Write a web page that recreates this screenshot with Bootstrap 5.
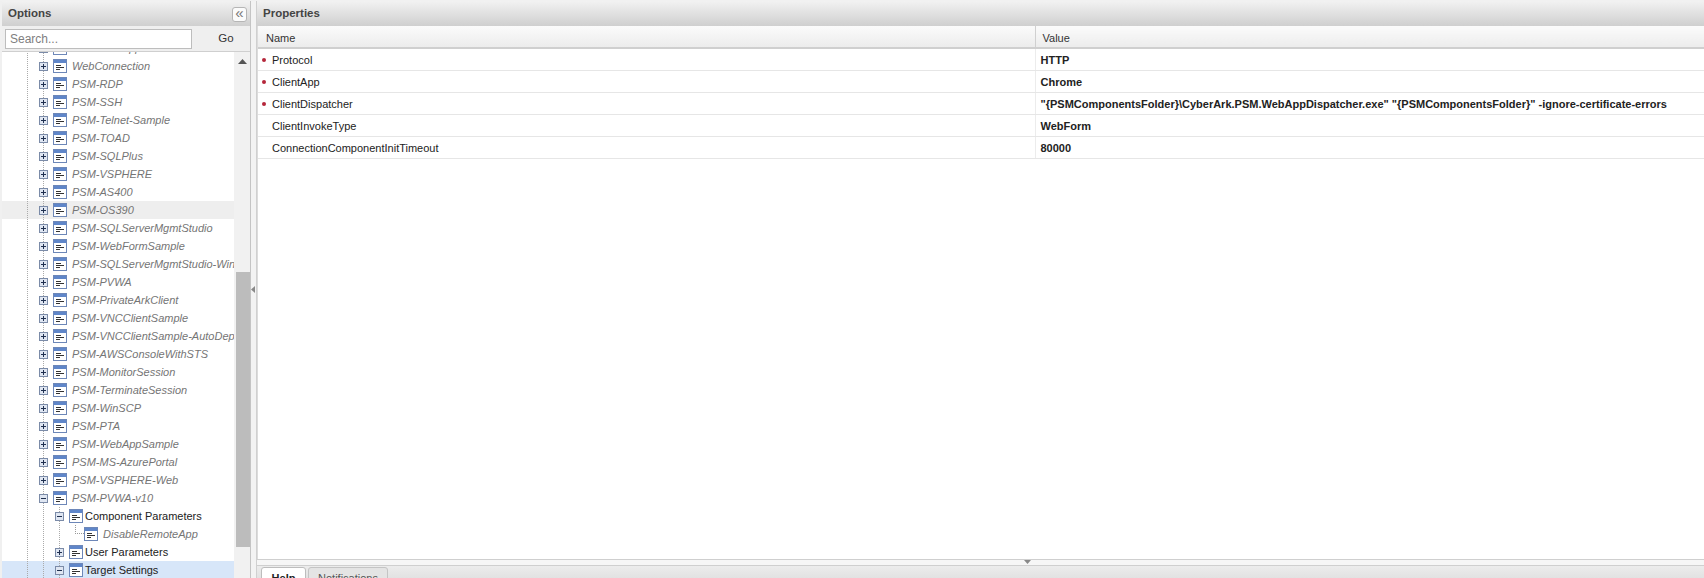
<!DOCTYPE html>
<html lang="en">
<head>
<meta charset="utf-8">
<title>Options</title>
<link rel="stylesheet" href="https://cdn.jsdelivr.net/npm/bootstrap@5.3.0/dist/css/bootstrap.min.css">
<style>
html,body{height:100%;}
body{font-family:"Liberation Sans",Arial,sans-serif;font-size:11px;color:#222;background:#f1f1f1;overflow:hidden;}
.shell{height:578px;padding-top:1px;}
.left-pane{width:251px;flex:none;padding-left:2px;border-right:1px solid #c4c4c4;background:#f0f0f0;}
.split-v{width:6px;flex:none;background:#f3f3f3;border-right:1px solid #d0d0d0;}
.split-v svg{display:block;}
.right-pane{min-width:0;}
.head-bar{height:25px;flex:none;background:linear-gradient(#f2f2f2,#cfcfcf);font-weight:700;font-size:11.5px;color:#444;padding:1px 6px 0;}
.collapse-btn{width:15px;height:15px;padding:0 0 2px;border:1px solid #b5b5b5;border-radius:3px;background:#fbfbfb;color:#777;font-size:15px;line-height:10px;margin-right:-3px;}
.search-row{height:26px;flex:none;background:#efefef;border-bottom:1px solid #cfcfcf;padding:3px 0 3px 3px;}
.search-box{width:187px;height:20px;border:1px solid #bdbdbd;border-radius:0;padding:0 4px;font-size:12px;font-family:inherit;color:#777;}
.search-box::placeholder{color:#808080;opacity:1;}
.go-label{flex:1;text-align:center;font-size:11.5px;color:#333;padding-left:10px;}
.tree-area{min-height:0;background:#fff;}
.tree-list{width:232px;overflow:hidden;flex:none;}
.tree-inner{margin-top:-13px;}
.tree-row{height:18px;white-space:nowrap;--g:linear-gradient(#aaa 50%,transparent 50%);background-image:var(--g),var(--g);background-size:1px 2px;background-repeat:repeat-y;background-position:25px 0,41px 0;}
.tree-row.deep{background-image:var(--g),var(--g),var(--g);background-position:25px 0,41px 0,57px 0;}
.tree-row.seen{background-color:#eee;}
.tree-row.picked{background-color:#d7e6f9;}
.ind-1{padding-left:37px;}
.ind-2{padding-left:53px;}
.ind-3{padding-left:73px;}
.tg{width:9px;height:9px;flex:none;margin-right:5px;}
.nd{width:14px;height:14px;flex:none;margin-right:5px;}
.elbow{width:9px;height:9px;flex:none;margin-top:-9px;border-left:1px dotted #999;border-bottom:1px dotted #999;}
.opt{font-style:italic;color:#757575;font-size:11px;}
.grp{color:#222;font-size:11px;margin-left:-3px;}
.scroll-track{width:17px;flex:none;background:#f1f1f1;}
.scroll-up{height:18px;color:#555;}
.scroll-gap{height:202px;flex:none;}
.scroll-thumb{height:275px;flex:none;margin:0 1px 0 2px;background:#bcbcbc;}
.prop-wrap{min-height:0;background:#fff;border-left:1px solid #dcdcdc;}
.prop-table{width:100%;table-layout:fixed;margin:0;font-size:11px;}
.prop-table th{height:22px;padding:3px 0 0 8px;font-weight:400;color:#333;border-bottom:2px solid #cfcfcf;background:linear-gradient(#fbfbfb,#ececec);vertical-align:middle;}
.prop-table th+th{border-left:1px solid #d0d0d0;padding-left:7px;}
.prop-table td{height:22px;padding:2px 0 0 14px;color:#222;border-bottom:1px solid #e6e6e6;vertical-align:middle;background:#fff;position:relative;}
.prop-table td+td{border-left:1px solid #ececec;padding-left:5px;font-weight:700;white-space:nowrap;}
.prop-name{width:777px;}
.req::before{content:"";position:absolute;left:4px;top:9px;width:4px;height:4px;border-radius:50%;background:#b5263a;}
.split-h{height:7px;flex:none;background:#f6f6f6;border-top:1px solid #cfcfcf;border-bottom:1px solid #cfcfcf;padding-left:94px;}
.tab-strip{height:12px;flex:none;background:linear-gradient(#ececec,#e2e2e2);padding-left:4px;overflow:hidden;gap:2px;border:0;flex-wrap:nowrap;}
.tab-strip .nav-link{height:20px;width:80px;padding:3px 0 0;text-align:center;font-size:11px;line-height:14px;margin:0;border:1px solid #c4c4c4;border-radius:3px 3px 0 0;color:#555;background:#e4e4e4;}
.tab-strip .nav-link.active{width:45px;background:#fff;color:#222;font-weight:700;border-color:#bdbdbd;}
.tab-strip .nav-item{margin-top:1px;}
</style>
</head>
<body>
<svg width="0" height="0" class="d-block" aria-hidden="true">
  <defs>
    <symbol id="plus" viewBox="0 0 9 9"><rect x=".5" y=".5" width="8" height="8" fill="#dfe6f2" stroke="#7b8ba8"/><path d="M2 4.500h5M4.500 2v5" stroke="#1f2f4f"/></symbol>
    <symbol id="minus" viewBox="0 0 9 9"><rect x=".5" y=".5" width="8" height="8" fill="#dfe6f2" stroke="#7b8ba8"/><path d="M2 4.500h5" stroke="#1f2f4f"/></symbol>
    <symbol id="node" viewBox="0 0 14 14"><rect x=".5" y=".5" width="13" height="13" fill="#fff" stroke="#6d87b8"/><rect x="1" y="1" width="12" height="3" fill="#5f86c9"/><path d="M3 6.500h5M3 8.500h8M3 10.500h4" stroke="#333"/></symbol>
  </defs>
</svg>
<div class="shell d-flex">
  <div class="left-pane d-flex flex-column">
    <div class="head-bar d-flex align-items-center justify-content-between">
      <span>Options</span>
      <button type="button" class="collapse-btn d-flex align-items-center justify-content-center">&laquo;</button>
    </div>
    <div class="search-row d-flex align-items-center">
      <input class="search-box" type="text" placeholder="Search...">
      <span class="go-label">Go</span>
    </div>
    <div class="tree-area d-flex flex-grow-1 overflow-hidden">
      <div class="tree-list">
        <div class="tree-inner">
          <div class="tree-row ind-1 d-flex align-items-center"><svg class="tg"><use href="#plus"/></svg><svg class="nd"><use href="#node"/></svg><span class="opt">PSM-WebApp</span></div>
          <div class="tree-row ind-1 d-flex align-items-center"><svg class="tg"><use href="#plus"/></svg><svg class="nd"><use href="#node"/></svg><span class="opt">WebConnection</span></div>
          <div class="tree-row ind-1 d-flex align-items-center"><svg class="tg"><use href="#plus"/></svg><svg class="nd"><use href="#node"/></svg><span class="opt">PSM-RDP</span></div>
          <div class="tree-row ind-1 d-flex align-items-center"><svg class="tg"><use href="#plus"/></svg><svg class="nd"><use href="#node"/></svg><span class="opt">PSM-SSH</span></div>
          <div class="tree-row ind-1 d-flex align-items-center"><svg class="tg"><use href="#plus"/></svg><svg class="nd"><use href="#node"/></svg><span class="opt">PSM-Telnet-Sample</span></div>
          <div class="tree-row ind-1 d-flex align-items-center"><svg class="tg"><use href="#plus"/></svg><svg class="nd"><use href="#node"/></svg><span class="opt">PSM-TOAD</span></div>
          <div class="tree-row ind-1 d-flex align-items-center"><svg class="tg"><use href="#plus"/></svg><svg class="nd"><use href="#node"/></svg><span class="opt">PSM-SQLPlus</span></div>
          <div class="tree-row ind-1 d-flex align-items-center"><svg class="tg"><use href="#plus"/></svg><svg class="nd"><use href="#node"/></svg><span class="opt">PSM-VSPHERE</span></div>
          <div class="tree-row ind-1 d-flex align-items-center"><svg class="tg"><use href="#plus"/></svg><svg class="nd"><use href="#node"/></svg><span class="opt">PSM-AS400</span></div>
          <div class="tree-row seen ind-1 d-flex align-items-center"><svg class="tg"><use href="#plus"/></svg><svg class="nd"><use href="#node"/></svg><span class="opt">PSM-OS390</span></div>
          <div class="tree-row ind-1 d-flex align-items-center"><svg class="tg"><use href="#plus"/></svg><svg class="nd"><use href="#node"/></svg><span class="opt">PSM-SQLServerMgmtStudio</span></div>
          <div class="tree-row ind-1 d-flex align-items-center"><svg class="tg"><use href="#plus"/></svg><svg class="nd"><use href="#node"/></svg><span class="opt">PSM-WebFormSample</span></div>
          <div class="tree-row ind-1 d-flex align-items-center"><svg class="tg"><use href="#plus"/></svg><svg class="nd"><use href="#node"/></svg><span class="opt">PSM-SQLServerMgmtStudio-Win</span></div>
          <div class="tree-row ind-1 d-flex align-items-center"><svg class="tg"><use href="#plus"/></svg><svg class="nd"><use href="#node"/></svg><span class="opt">PSM-PVWA</span></div>
          <div class="tree-row ind-1 d-flex align-items-center"><svg class="tg"><use href="#plus"/></svg><svg class="nd"><use href="#node"/></svg><span class="opt">PSM-PrivateArkClient</span></div>
          <div class="tree-row ind-1 d-flex align-items-center"><svg class="tg"><use href="#plus"/></svg><svg class="nd"><use href="#node"/></svg><span class="opt">PSM-VNCClientSample</span></div>
          <div class="tree-row ind-1 d-flex align-items-center"><svg class="tg"><use href="#plus"/></svg><svg class="nd"><use href="#node"/></svg><span class="opt">PSM-VNCClientSample-AutoDep</span></div>
          <div class="tree-row ind-1 d-flex align-items-center"><svg class="tg"><use href="#plus"/></svg><svg class="nd"><use href="#node"/></svg><span class="opt">PSM-AWSConsoleWithSTS</span></div>
          <div class="tree-row ind-1 d-flex align-items-center"><svg class="tg"><use href="#plus"/></svg><svg class="nd"><use href="#node"/></svg><span class="opt">PSM-MonitorSession</span></div>
          <div class="tree-row ind-1 d-flex align-items-center"><svg class="tg"><use href="#plus"/></svg><svg class="nd"><use href="#node"/></svg><span class="opt">PSM-TerminateSession</span></div>
          <div class="tree-row ind-1 d-flex align-items-center"><svg class="tg"><use href="#plus"/></svg><svg class="nd"><use href="#node"/></svg><span class="opt">PSM-WinSCP</span></div>
          <div class="tree-row ind-1 d-flex align-items-center"><svg class="tg"><use href="#plus"/></svg><svg class="nd"><use href="#node"/></svg><span class="opt">PSM-PTA</span></div>
          <div class="tree-row ind-1 d-flex align-items-center"><svg class="tg"><use href="#plus"/></svg><svg class="nd"><use href="#node"/></svg><span class="opt">PSM-WebAppSample</span></div>
          <div class="tree-row ind-1 d-flex align-items-center"><svg class="tg"><use href="#plus"/></svg><svg class="nd"><use href="#node"/></svg><span class="opt">PSM-MS-AzurePortal</span></div>
          <div class="tree-row ind-1 d-flex align-items-center"><svg class="tg"><use href="#plus"/></svg><svg class="nd"><use href="#node"/></svg><span class="opt">PSM-VSPHERE-Web</span></div>
          <div class="tree-row ind-1 d-flex align-items-center"><svg class="tg"><use href="#minus"/></svg><svg class="nd"><use href="#node"/></svg><span class="opt">PSM-PVWA-v10</span></div>
          <div class="tree-row deep ind-2 d-flex align-items-center"><svg class="tg"><use href="#minus"/></svg><svg class="nd"><use href="#node"/></svg><span class="grp">Component Parameters</span></div>
          <div class="tree-row deep ind-3 d-flex align-items-center"><span class="elbow"></span><svg class="nd"><use href="#node"/></svg><span class="opt">DisableRemoteApp</span></div>
          <div class="tree-row deep ind-2 d-flex align-items-center"><svg class="tg"><use href="#plus"/></svg><svg class="nd"><use href="#node"/></svg><span class="grp">User Parameters</span></div>
          <div class="tree-row picked deep ind-2 d-flex align-items-center"><svg class="tg"><use href="#minus"/></svg><svg class="nd"><use href="#node"/></svg><span class="grp">Target Settings</span></div>
        </div>
      </div>
      <div class="scroll-track d-flex flex-column">
        <div class="scroll-up d-flex align-items-center justify-content-center"><svg width="9" height="5" viewBox="0 0 9 5"><path d="M4.500 0 9 5H0z" fill="#555"/></svg></div>
        <div class="scroll-gap"></div>
        <div class="scroll-thumb"></div>
      </div>
    </div>
  </div>
  <div class="split-v d-flex align-items-center"><svg width="5" height="7" viewBox="0 0 5 7"><path d="M4 0v7L0 3.500z" fill="#888"/></svg></div>
  <div class="right-pane flex-grow-1 d-flex flex-column">
    <div class="head-bar d-flex align-items-center"><span>Properties</span></div>
    <div class="prop-wrap flex-grow-1">
      <table class="table prop-table">
        <thead><tr><th class="prop-name">Name</th><th>Value</th></tr></thead>
        <tbody>
          <tr><td class="req">Protocol</td><td>HTTP</td></tr>
          <tr><td class="req">ClientApp</td><td>Chrome</td></tr>
          <tr><td class="req">ClientDispatcher</td><td>"{PSMComponentsFolder}\CyberArk.PSM.WebAppDispatcher.exe" "{PSMComponentsFolder}" -ignore-certificate-errors</td></tr>
          <tr><td>ClientInvokeType</td><td>WebForm</td></tr>
          <tr><td>ConnectionComponentInitTimeout</td><td>80000</td></tr>
        </tbody>
      </table>
    </div>
    <div class="split-h d-flex justify-content-center"><svg width="7" height="4" viewBox="0 0 7 4"><path d="M0 0h7L3.500 4z" fill="#888"/></svg></div>
    <ul class="nav nav-tabs tab-strip">
      <li class="nav-item"><a class="nav-link active" href="#">Help</a></li>
      <li class="nav-item"><a class="nav-link" href="#">Notifications</a></li>
    </ul>
  </div>
</div>
</body>
</html>
